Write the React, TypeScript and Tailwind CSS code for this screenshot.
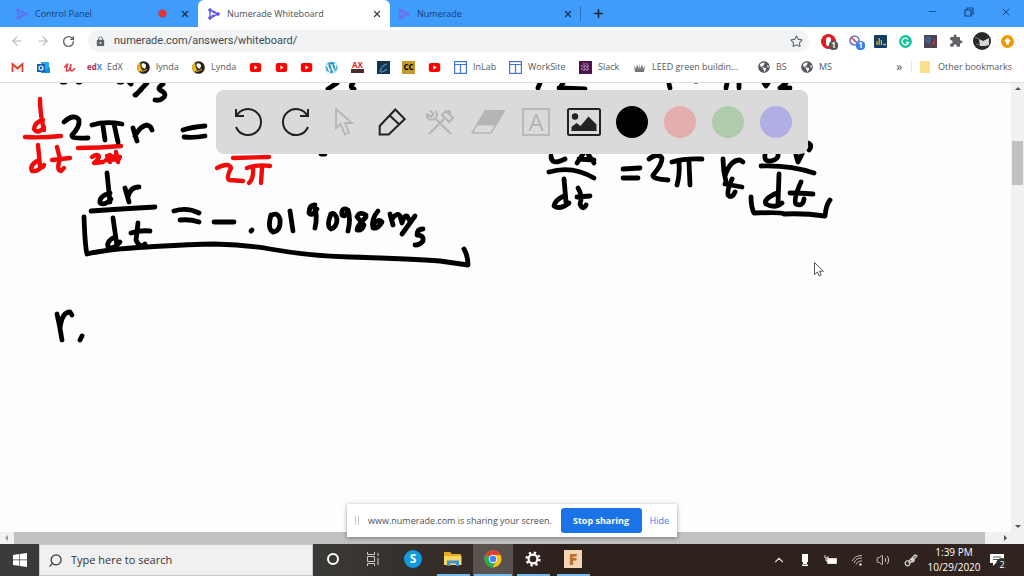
import type { ReactNode } from "react";
import {
  ArrowLeft,
  ArrowRight,
  ChevronUp,
  Minus,
  Plus,
  RotateCw,
  Search,
  Star,
  Volume2,
  X,
} from "lucide-react";
import { FaGlobeAmericas, FaWordpress } from "react-icons/fa";
import { MdExtension, MdLock } from "react-icons/md";

const NumeradeIcon = ({ color }: { color: string }) => (
  <svg viewBox="0 0 12 12" className="size-3 shrink-0" fill={color} stroke={color}>
    <path d="M2 2v8l8-4z" fill="none" strokeWidth="1.4" />
    <circle cx="2" cy="2" r="1.3" />
    <circle cx="2" cy="10" r="1.3" />
    <circle cx="10" cy="6" r="1.3" />
    <circle cx="6" cy="4" r="1" />
    <circle cx="5" cy="8" r="1" />
  </svg>
);

const YoutubeIcon = () => (
  <svg viewBox="0 0 13 13" className="size-[13px]">
    <rect x=".8" y="2" width="11.4" height="9" rx="2.2" fill="#f00" />
    <path d="M5.3 4.5v4l3.4-2z" fill="#fff" />
  </svg>
);

const LyndaIcon = () => (
  <svg viewBox="0 0 13 13" className="size-[13px]">
    <circle cx="6.5" cy="6.5" r="6.3" fill="#231f14" />
    <path d="M3.5.9A6.3 6.3 0 0 0 2 11c1-1 3-1 4-2C4 8 3 5 3.5.9z" fill="#f2b81a" />
    <path d="M5 2.5c2-.8 4 .4 4 2.5l-1 3-2-1C4.5 6 4 4 5 2.5z" fill="#fff" />
    <path d="M4 11c2-1.5 5-1 6-3" stroke="#f2b81a" fill="none" />
  </svg>
);

const PanelIcon = () => (
  <svg viewBox="0 0 13 13" className="size-[13px]" fill="none" stroke="#4472d6" strokeWidth="1.2">
    <rect x=".6" y=".6" width="11.8" height="11.8" />
    <path d="M.6 3.5h11.8M6.5 3.5v9" />
  </svg>
);

const bookmarks: { label: string; text?: string; width: string; icon: ReactNode }[] = [
  {
    label: "Gmail",
    width: "w-[26px]",
    icon: (
      <svg viewBox="0 0 13 13" className="size-[13px]">
        <path d="M1 2.5h11v8.5H1z" fill="#f4f0ef" />
        <path d="M1.5 11V3l5 4.5 5-4.5v8" fill="none" stroke="#d5402f" strokeWidth="1.7" />
      </svg>
    ),
  },
  {
    label: "Outlook",
    width: "w-[26px]",
    icon: (
      <svg viewBox="0 0 13 13" className="size-[13px]">
        <path d="M4 1h8v10H4z" fill="#28a8ea" />
        <path d="M4 6l5 2.5L13 6v6H4z" fill="#1490df" />
        <rect y="3" width="8" height="8" fill="#0f64b8" />
        <circle cx="4" cy="7" r="2" fill="none" stroke="#fff" strokeWidth="1.2" />
      </svg>
    ),
  },
  {
    label: "Udemy",
    width: "w-[25px]",
    icon: (
      <svg viewBox="0 0 13 13" className="size-[13px]" fill="none" stroke="#e8484c" strokeWidth="1.7" strokeLinecap="round">
        <path d="M1.5 6C3 5 4 3 4.5 3 5 4 2 10 4 10s3.500-4 4-7c-.5 3-1.500 7 .5 7s2-1 3-2.500" />
      </svg>
    ),
  },
  {
    label: "EdX",
    text: "EdX",
    width: "w-[49px]",
    icon: (
      <span className="flex text-[8px] font-bold text-[#c3245c]">
        ed<span className="text-[#1f8fe0]">X</span>
      </span>
    ),
  },
  { label: "lynda", text: "lynda", width: "w-[55px]", icon: <LyndaIcon /> },
  { label: "Lynda", text: "Lynda", width: "w-[57px]", icon: <LyndaIcon /> },
  { label: "YouTube", width: "w-[26px]", icon: <YoutubeIcon /> },
  { label: "YouTube", width: "w-[25px]", icon: <YoutubeIcon /> },
  { label: "YouTube", width: "w-[25px]", icon: <YoutubeIcon /> },
  { label: "WordPress", width: "w-[26px]", icon: <FaWordpress className="size-[13px] text-[#2196c9]" /> },
  {
    label: "AX",
    width: "w-[26px]",
    icon: (
      <span className="flex h-[11px] w-[13px] items-center justify-center border-b-4 border-[#4a2a2a] text-[8px] leading-none font-bold text-[#d8202c]">
        AX
      </span>
    ),
  },
  {
    label: "Simulation",
    width: "w-[25px]",
    icon: (
      <svg viewBox="0 0 13 13" className="size-[13px]">
        <rect width="13" height="13" fill="#16324d" />
        <path d="M3 11C4 6 6 4 10 3M3 11c3 0 5-1 7-3" stroke="#3f7fae" fill="none" strokeWidth="1.500" />
      </svg>
    ),
  },
  {
    label: "Closed captions",
    width: "w-[26px]",
    icon: (
      <span className="flex size-[13px] items-center justify-center bg-[#c49a2a] text-[8px] leading-none font-bold text-black">
        CC
      </span>
    ),
  },
  { label: "YouTube", width: "w-[26px]", icon: <YoutubeIcon /> },
  { label: "InLab", text: "InLab", width: "w-[55px]", icon: <PanelIcon /> },
  { label: "WorkSite", text: "WorkSite", width: "w-[70px]", icon: <PanelIcon /> },
  {
    label: "Slack",
    text: "Slack",
    width: "w-[54px]",
    icon: (
      <svg viewBox="0 0 13 13" className="size-[13px]">
        <rect width="13" height="13" fill="#4a154b" />
        <path d="M5 2v9M8 2v9M2 5h9M2 8h9" stroke="#c9a7ca" strokeDasharray="2 1" />
      </svg>
    ),
  },
  {
    label: "LEED green building",
    text: "LEED green buildin...",
    width: "w-[124px]",
    icon: (
      <svg viewBox="0 0 13 13" className="size-[13px]" fill="#777">
        <path d="M1 4l2 4 1-5 2 5 .5-6L7 8l2-5 1 5 2-4-1 7H2z" />
      </svg>
    ),
  },
  { label: "BS", text: "BS", width: "w-[43px]", icon: <FaGlobeAmericas className="size-[12px] text-[#55585c]" /> },
  { label: "MS", text: "MS", width: "w-[43px]", icon: <FaGlobeAmericas className="size-[12px] text-[#55585c]" /> },
];

const tools: { label: string; icon: ReactNode }[] = [
  {
    label: "Undo",
    icon: (
      <svg viewBox="0 0 30 30" className="size-[30px]" fill="none" stroke="#222" strokeWidth="2">
        <path d="M3 2v7h8M3.500 9A13 13 0 1 1 3 20" />
      </svg>
    ),
  },
  {
    label: "Redo",
    icon: (
      <svg viewBox="0 0 30 30" className="size-[30px]" fill="none" stroke="#222" strokeWidth="2">
        <path d="M27 2v7h-8M26.500 9A13 13 0 1 0 27 20" />
      </svg>
    ),
  },
  {
    label: "Select",
    icon: (
      <svg viewBox="0 0 28 28" className="size-7" fill="none" stroke="#b5b5b5" strokeWidth="1.800">
        <path d="M6 1v19l4.500-4 4.500 10.500 4-2-4-9.500h7z" />
      </svg>
    ),
  },
  {
    label: "Pen",
    icon: (
      <svg viewBox="0 0 28 28" className="size-7" fill="none" stroke="#222" strokeWidth="2">
        <path d="M17.300 1.500l9.400 9.500-16 15.500H1.700v-8.500zM11.700 7.500l9.600 9" />
      </svg>
    ),
  },
  {
    label: "Tools",
    icon: (
      <svg viewBox="0 0 28 28" className="size-7" fill="none" stroke="#b5b5b5" strokeWidth="2">
        <path d="M3 26L18 11M25 26L10 11M16 7l4-4 7 7-4 4zM22 2l3 3" />
        <path d="M4 2.500l3.500 3.500-2 2.500L1 6.500C0 10 4 13 8 11c3-1 4-5 1.500-8" />
      </svg>
    ),
  },
  {
    label: "Eraser",
    icon: (
      <svg viewBox="0 0 36 28" className="h-7 w-9" stroke="#b5b5b5" strokeWidth="1.500" strokeLinejoin="round">
        <path d="M15.500 3h18.500L21 25H2z" fill="none" />
        <path d="M15.500 3h18.500l-8 13.500H7z" fill="#b5b5b5" />
      </svg>
    ),
  },
  {
    label: "Text",
    icon: (
      <span className="flex size-7 items-center justify-center border-2 border-[#b9b9b9] text-2xl leading-none text-[#b5b5b5]">
        A
      </span>
    ),
  },
  {
    label: "Image",
    icon: (
      <svg viewBox="0 0 34 28" className="h-7 w-[34px]">
        <rect x="1" y="1" width="32" height="26" rx="1.500" fill="none" stroke="#222" strokeWidth="2" />
        <circle cx="8" cy="8.500" r="3.200" fill="#222" />
        <path d="M4.500 23v-4l5-4 4 3 8-9.500 8 8V23z" fill="#222" />
      </svg>
    ),
  },
  { label: "Black", icon: <span className="size-8 rounded-full bg-black" /> },
  { label: "Red", icon: <span className="size-8 rounded-full bg-[#e3aead]" /> },
  { label: "Green", icon: <span className="size-8 rounded-full bg-[#aecbab]" /> },
  { label: "Blue", icon: <span className="size-8 rounded-full bg-[#b0aee3]" /> },
];

// pen strokes, in window coordinates
const redInk = [
  "M40 99Q40 114 44 130M43 120Q35 122 34 129Q38 135 44 127",
  "M25 137Q42 138 61 136",
  "M38 145L40 166Q43 169 44 165M39 160Q29 165 32 171Q38 172 42 166",
  "M57 147L60 159Q56 170 61 171L64 168M52 160L70 158",
  "M78 148Q100 148 121 146",
  "M92 157Q98 153 99 157Q98 160 94 163L103 162M107 156L120 157M110 155V162M116 152L118 162M106 160L119 159",
  "M233 158L269 157",
  "M217 168Q229 162 231 168Q226 178 229 180L243 181",
  "M247 168Q258 164 270 166M253 168Q254 178 249 183M262 168L261 183",
];

const ink = [
  // top row, cut off by the browser bar
  "M62 82H65M78 82H80M119 82H122M129 82L131 84M136 95Q141 89 147 83M135 95L141 90",
  "M163 84Q157 88 160 90Q168 94 163 98Q160 101 155 100",
  "M328 89L337 83M353 83Q349 87 354 89",
  "M540 83L538 88M563 83L560 88M559 88L585 89M669 84L670 88",
  "M695 81H697M727 83L726 88M739 83L739 88M764 83L766 86L768 83M786 83L780 88H790",
  // 2 pi r =
  "M64 122Q74 113 79 120Q80 127 72 135Q70 139 88 138",
  "M92 125Q105 121 122 124M103 126L105 140M114 124L118 142",
  "M133 128L137 141M135 136Q140 126 147 125Q151 126 152 130",
  "M183 130Q192 127 205 126M184 137Q194 138 205 136",
  "M321 154H325",
  // dr/dt
  "M107 173L110 202M110 193Q99 196 100 203Q105 206 111 199",
  "M125 188L129 202M128 197Q130 187 139 187",
  "M91 211Q120 209 155 207",
  "M113 218L117 246M115 237Q106 241 108 247Q113 250 120 242",
  "M138 223L136 240Q140 249 145 244M131 233Q140 230 150 231",
  "M174 211Q187 207 199 213M180 220Q190 219 199 222M214 222H234",
  // -.0190986 m/s
  "M252 230L251 231",
  "M271 215Q267 229 273 232Q281 231 280 219Q277 211 271 216",
  "M290 211L293 231",
  "M315 205Q309 205 309 213Q312 217 317 209M314 205Q318 216 315 228",
  "M331 214Q326 226 331 229Q337 227 337 219Q335 212 331 214",
  "M346 209Q341 208 342 215Q346 218 348 210Q351 219 348 231",
  "M366 215Q359 211 357 217L364 225Q362 231 357 230Q357 226 366 217",
  "M378 211Q371 219 373 228Q378 229 382 222Q378 218 373 225",
  "M390 214L393 225M392 219Q397 212 400 216L402 223Q404 215 407 216L410 221",
  "M415 216L402 234",
  "M423 229Q417 229 417 235Q424 235 423 241Q420 245 415 245",
  "M84 217Q85 246 87 254Q108 249 147 247Q195 244 214 244Q248 245 270 249Q310 256 350 257Q415 259 440 261L468 265Q468 256 464 249",
  // r.
  "M57 314Q60 327 62 340M60 328Q62 312 70 312L72 315M82 336L80 340",
  // dA/dt = 2 pi r dr/dt
  "M551 156Q551 166 565 159M577 163L583 154M588 154L594 163M579 159L594 160",
  "M549 172Q572 165 594 178",
  "M564 179L566 202M564 196Q555 200 554 206Q560 210 569 203",
  "M578 188Q583 196 580 204Q583 211 586 205M577 197L590 196",
  "M623 169L640 168M623 178H638",
  "M649 159Q658 152 662 158Q662 165 653 175Q652 179 668 180",
  "M672 162Q685 158 702 159M679 162Q680 174 677 185M689 162L690 185",
  "M723 159Q723 170 726 182M725 176Q730 160 740 160L743 162",
  "M732 179Q727 190 728 195Q732 199 735 192M725 184L742 187",
  "M761 166Q790 165 814 173",
  "M765 155Q764 162 771 161Q779 159 778 154M796 155L798 162L802 154M808 143Q813 145 809 150",
  "M779 174L778 203M777 193Q763 199 766 204Q775 209 782 203",
  "M801 182Q793 200 796 204Q803 207 804 199M790 193Q802 193 813 194",
  "M751 197Q751 207 754 213Q782 212 784 214Q804 213 825 216Q826 205 830 200",
];

const Tab = ({ title, color }: { title: string; color: string }) => (
  <>
    <NumeradeIcon color={color} />
    <span className="ml-[7px] flex-1 truncate">{title}</span>
  </>
);

function TabStrip() {
  return (
    <header className="flex h-[27px] shrink-0 bg-[#3f9cfb] text-[9px] text-[#173f70]">
      <div className="flex w-[198px] items-center pr-2 pl-4">
        <Tab title="Control Panel" color="#5f72f0" />
        <span className="mr-[13px] size-[9px] rounded-full border border-[#7d63a8] bg-[#e8352b]" />
        <button aria-label="Close tab"><X size={10} strokeWidth={3} className="text-[#15304f]" /></button>
      </div>
      <div className="flex w-[192px] items-center rounded-t-md bg-white pr-2 pl-[10px] text-[#4a4d50]">
        <Tab title="Numerade Whiteboard" color="#5a55e8" />
        <button aria-label="Close tab"><X size={10} strokeWidth={3} className="text-[#3c4043]" /></button>
      </div>
      <div className="flex w-[190px] items-center pr-[7px] pl-2">
        <Tab title="Numerade" color="#6f6cf0" />
        <button aria-label="Close tab"><X size={10} strokeWidth={3} className="text-[#15304f]" /></button>
      </div>
      <div className="my-[6px] w-px bg-[#2a6fbd]" />
      <button aria-label="New tab" className="ml-[11px]">
        <Plus size={13} strokeWidth={3} className="text-[#12263d]" />
      </button>
      <div className="ml-auto flex items-center gap-[26px] pr-3 pb-1 text-[#16467d]">
        <button aria-label="Minimize"><Minus size={11} /></button>
        <button aria-label="Restore">
          <svg viewBox="0 0 10 10" className="size-[10px]" fill="none" stroke="currentColor" strokeWidth="1.200">
            <path d="M1 3h6v6H1zM3 3V1h6v6H7" />
          </svg>
        </button>
        <button aria-label="Close window"><X size={12} strokeWidth={2} /></button>
      </div>
    </header>
  );
}

function AddressBar() {
  return (
    <div className="flex h-[28px] shrink-0 items-center bg-white pr-[10px] pl-[10px] text-[#5f6368]">
      <div className="flex w-[78px] items-center gap-3">
        <button aria-label="Back"><ArrowLeft size={14} className="text-[#b5b8bb]" /></button>
        <button aria-label="Forward"><ArrowRight size={14} className="text-[#b5b8bb]" /></button>
        <button aria-label="Reload"><RotateCw size={13} strokeWidth={2.5} /></button>
      </div>
      <div className="mr-3 flex h-[22px] flex-1 items-center gap-2 rounded-full bg-[#f1f3f4] pr-[6px] pl-[7px]">
        <MdLock className="size-[11px]" />
        <input
          aria-label="Address"
          readOnly
          value="numerade.com/answers/whiteboard/"
          className="flex-1 bg-transparent font-[Roboto,sans-serif] text-[11px] text-[#45494d] outline-none"
        />
        <button aria-label="Bookmark"><Star size={13} /></button>
      </div>
      <div className="flex items-center gap-3">
        <span className="relative mr-px size-[15px] rounded-full bg-[#e01b22]">
          <span className="absolute inset-x-[5px] inset-y-[3px] rounded-full bg-white" />
          <span className="absolute top-[7px] left-2 flex h-[9px] w-[9px] items-center justify-center rounded-sm bg-[#555] text-[8px] font-bold text-white">1</span>
        </span>
        <span className="relative size-[13px]">
          <svg viewBox="0 0 13 13" fill="none" strokeWidth="1.700">
            <circle cx="5.500" cy="5.500" r="4.500" stroke="#7077b8" />
            <path d="M2.500 2.500l6 6" stroke="#c94a5c" />
          </svg>
          <span className="absolute top-[6px] left-[7px] flex h-[9px] w-[9px] items-center justify-center rounded-sm bg-[#3c7ef0] text-[8px] font-bold text-white">1</span>
        </span>
        <svg viewBox="0 0 13 13" className="size-[13px]">
          <rect width="13" height="13" rx="1" fill="#103d66" />
          <path d="M3 10V6M5.200 10V3M7.400 10V5M9 9.500h3" stroke="#e6b325" strokeWidth="1.300" />
        </svg>
        <svg viewBox="0 0 13 13" className="size-[13px]">
          <circle cx="6.500" cy="6.500" r="6.400" fill="#15c39a" />
          <path d="M9 4.500a3.300 3.300 0 1 0 .5 3H7" fill="none" stroke="#fff" strokeWidth="1.300" />
        </svg>
        <svg viewBox="0 0 13 13" className="size-[13px]">
          <rect width="13" height="13" fill="#4a4550" />
          <path d="M2 3h4v3H2zM3 8h3" stroke="#3a6ca8" fill="none" strokeWidth="1.500" />
          <path d="M7 10l4-6v5z" fill="#d0303c" />
        </svg>
        <MdExtension className="size-[14px]" />
        <svg viewBox="0 0 18 18" className="-mx-[2px] size-[18px]">
          <circle cx="9" cy="9" r="9" fill="#2a2828" />
          <path d="M6 7l4 2 6-3v7l-4 1H7z" fill="#d6d6d6" />
          <path d="M2 5l4 2M3 12l4 1" stroke="#777" />
        </svg>
        <svg viewBox="0 0 13 13" className="size-[13px]">
          <circle cx="6.500" cy="6.500" r="6.500" fill="#f29900" />
          <path d="M6.500 2.500L10 6.500H8v3H5v-3H3z" fill="#fff" />
        </svg>
      </div>
    </div>
  );
}

function BookmarksBar() {
  return (
    <nav className="flex h-[28px] shrink-0 items-center border-b border-[#dcdee0] bg-white pb-[3px] pl-[11px] text-[9px] text-[#55595d]">
      {bookmarks.map((b, i) => (
        <a key={i} href="#" aria-label={b.label} className={`flex shrink-0 items-center gap-[6px] whitespace-nowrap ${b.width}`}>
          <span className="flex w-[13px] shrink-0 justify-center">{b.icon}</span>
          {b.text}
        </a>
      ))}
      <button aria-label="More bookmarks" className="ml-auto text-xs leading-none">»</button>
      <span className="ml-[9px] h-3 w-px bg-[#e3e5e7]" />
      <a href="#" className="mr-3 ml-2 flex items-center gap-2 whitespace-nowrap">
        <span className="h-3 w-[10px] rounded-[1px] bg-[#f9e08c]" />
        Other bookmarks
      </a>
    </nav>
  );
}

function Whiteboard() {
  return (
    <main className="relative flex min-h-0 flex-1 flex-col bg-[#fdfdfd]">
      <div className="flex min-h-0 flex-1">
        <div className="relative min-w-0 flex-1 overflow-hidden">
          <svg
            role="img"
            aria-label="Handwritten related rates work"
            viewBox="0 83 1010 300"
            className="absolute top-0 left-0 h-[300px] w-[1010px]"
            fill="none"
            strokeLinecap="round"
            strokeLinejoin="round"
          >
            <g stroke="#f00a0a" strokeWidth="4.4">
              {redInk.map((d) => <path key={d} d={d} />)}
            </g>
            <g stroke="#000" strokeWidth="4.8">
              {ink.map((d) => <path key={d} d={d} />)}
            </g>
            <path d="M814.500 263v11.500l2.800-2.500 1.900 4 2-1-1.900-3.800h3.700z" fill="#fff" stroke="#555" />
          </svg>
        </div>
        <div className="flex w-[13px] flex-col items-center bg-[#f1f1f1] py-1">
          <span className="border-x-[3px] border-b-[3px] border-x-transparent border-b-[#555]" />
          <span className="mt-[51px] h-11 w-[11px] bg-[#c1c1c1]" />
          <span className="mt-auto border-x-[3px] border-t-[3px] border-x-transparent border-t-[#555]" />
        </div>
      </div>
      <div className="flex h-3 shrink-0 items-center bg-[#f1f1f1]">
        <span className="mr-[6px] ml-[5px] border-y-[3px] border-r-[3px] border-y-transparent border-r-[#999]" />
        <span className="h-full flex-1 bg-[#c1c1c1]" />
        <span className="mr-[17px] ml-[19px] border-y-[3px] border-l-[3px] border-y-transparent border-l-[#555]" />
      </div>

      <div
        role="toolbar"
        aria-label="Drawing tools"
        className="absolute top-[7px] left-1/2 flex h-16 -translate-x-1/2 rounded-lg bg-[#dadada] px-2"
      >
        {tools.map((t) => (
          <button key={t.label} aria-label={t.label} className="flex w-12 items-center justify-center">
            {t.icon}
          </button>
        ))}
      </div>

      <div className="absolute bottom-[7px] left-1/2 flex h-[33px] w-[330px] -translate-x-1/2 items-center bg-white px-2 text-[9px] whitespace-nowrap text-[#4c5054] shadow-[0_1px_4px_rgba(0,0,0,0.4)]">
        <span className="mr-[9px] h-[9px] w-1 border-x border-[#c4c7ca]" />
        <span className="flex-1">www.numerade.com is sharing your screen.</span>
        <button className="h-[25px] w-[81px] rounded-[3px] bg-[#1b73e8] font-bold text-white">Stop sharing</button>
        <button className="ml-2 text-[#3b7de8]">Hide</button>
      </div>
    </main>
  );
}

const TaskButton = ({ label, state, children }: { label: string; state?: "open" | "active"; children: ReactNode }) => (
  <button
    aria-label={label}
    className={`flex w-10 items-center justify-center ${state === "active" ? "bg-white/20" : ""}`}
  >
    <span className={`flex h-full items-center justify-center border-b-2 ${state === "active" ? "w-[38px]" : "w-[33px]"} ${state ? "border-[#76b9ed]" : "border-transparent"}`}>
      {children}
    </span>
  </button>
);

function Taskbar() {
  return (
    <footer className="flex h-8 shrink-0 bg-linear-to-r from-[#3b3a38] from-30% via-[#2d211b] via-55% to-[#30231d] text-white">
      <button aria-label="Start" className="flex w-[39px] items-center justify-center">
        <svg viewBox="0 0 14 14" className="size-[14px]" fill="#fff">
          <path d="M0 2l6-.9v5.500H0zM6.600 1L14 0v6.600H6.600zM0 7.200h6v5.500L0 12zM6.600 7.200H14V14l-7.400-1z" />
        </svg>
      </button>
      <label className="flex w-[274px] items-center gap-2 border border-[#c8c8c8] bg-[#f0f0f0] pl-2 text-[#333]">
        <Search size={15} strokeWidth={2} className="shrink-0 -scale-x-100" />
        <input
          aria-label="Search"
          placeholder="Type here to search"
          className="min-w-0 flex-1 bg-transparent text-[11px] outline-none placeholder:text-[#333]"
        />
      </label>
      <TaskButton label="Cortana">
        <span className="size-3 rounded-full border-2 border-white" />
      </TaskButton>
      <TaskButton label="Task view">
        <svg viewBox="0 0 14 14" className="size-[14px]" fill="none" stroke="#ccc">
          <path d="M1.500 0v2.500h7V0M1.500 4.500h7v5h-7zM1.500 14v-2.500h7V14M12 1v3M12 6v7" />
        </svg>
      </TaskButton>
      <TaskButton label="Skype">
        <span className="flex size-[18px] items-center justify-center rounded-full bg-[#0f9be0] text-xs leading-none font-bold">S</span>
      </TaskButton>
      <TaskButton label="File Explorer" state="open">
        <svg viewBox="0 0 18 16" className="h-4 w-[18px]">
          <path d="M0 1h6l2 2h9v11H0z" fill="#e8a823" />
          <path d="M0 5h17.500v9H0z" fill="#fbd766" />
          <path d="M3 15V9.500h12V15h-3v-2.500H6V15z" fill="#3f92d2" />
        </svg>
      </TaskButton>
      <TaskButton label="Chrome" state="active">
        <svg viewBox="0 0 18 18" className="size-[18px]">
          <circle cx="9" cy="9" r="8.500" fill="#fbc116" />
          <path d="M9 9L1.600 4.800A8.500 8.500 0 0 1 16.500 5H9z" fill="#e33b2e" />
          <path d="M9 9L1.600 4.800A8.500 8.500 0 0 0 8.500 17.500L12.500 11z" fill="#2da94f" />
          <circle cx="9" cy="9" r="4.200" fill="#fff" />
          <circle cx="9" cy="9" r="3.300" fill="#4285f4" />
        </svg>
      </TaskButton>
      <TaskButton label="Settings" state="open">
        <svg viewBox="0 0 16 16" className="size-4" fill="none" stroke="#fff">
          <circle cx="8" cy="8" r="4.400" strokeWidth="2.200" />
          <circle cx="8" cy="8" r="6.400" strokeWidth="2.400" strokeDasharray="2.300 2.727" />
        </svg>
      </TaskButton>
      <TaskButton label="Fusion 360" state="open">
        <span className="flex size-[18px] items-center justify-center bg-[#f6d5b4] text-base leading-none font-extrabold text-[#b8702c]">F</span>
      </TaskButton>

      <div className="ml-auto flex items-center text-[#ddd]">
        <ChevronUp size={14} strokeWidth={2} className="mr-3" />
        <svg viewBox="0 0 14 14" className="mr-3 size-[14px]" fill="#fff">
          <path d="M4 1h6v8H4zM5 9h4v2H5zM4 11.500h6v1.500H4z" />
        </svg>
        <svg viewBox="0 0 14 14" className="mr-3 size-[14px]" stroke="#ddd" fill="none">
          <path d="M3.500 5.500h9v5h-9z" fill="#fff" />
          <path d="M1 2v3h3V3M2 5v3h2" />
        </svg>
        <svg viewBox="0 0 14 14" className="mr-3 size-[14px]" stroke="#bbb" fill="none">
          <path d="M2 8A11 11 0 0 1 12 2.500M4 10a8 8 0 0 1 8-5M6 11.500A6 6 0 0 1 12 8" />
          <circle cx="10.500" cy="11.500" r="1" fill="#fff" />
        </svg>
        <Volume2 size={14} strokeWidth={1.5} className="mr-[14px]" />
        <svg viewBox="0 0 14 14" className="mr-2 size-[14px]" stroke="#ddd" fill="none" strokeWidth="1.200">
          <path d="M5 8l6-6 2 1-6 6-2 .5zM5 8C2 7 0 10 2 12s4 0 4-2 3 0 4-2-1-3-3-1" />
        </svg>
        <div className="w-14 text-center text-[10px] leading-[15px] text-white">
          <p>1:39 PM</p>
          <p>10/29/2020</p>
        </div>
        <button aria-label="Notifications" className="relative mr-5 ml-2">
          <svg viewBox="0 0 14 14" className="size-[14px]">
            <path d="M0 1h14v9H6l-3 3v-3H0z" fill="#fff" />
            <path d="M3 4h8M3 6.500h8" stroke="#555" />
          </svg>
          <span className="absolute top-[5px] left-[6px] flex size-3 items-center justify-center rounded-full bg-[#2e2a28] text-[9px] leading-none text-white">2</span>
        </button>
      </div>
    </footer>
  );
}

export default function App() {
  return (
    <div className="flex h-screen flex-col overflow-hidden font-['Open_Sans','Noto_Sans',sans-serif]">
      <TabStrip />
      <AddressBar />
      <BookmarksBar />
      <Whiteboard />
      <Taskbar />
    </div>
  );
}
